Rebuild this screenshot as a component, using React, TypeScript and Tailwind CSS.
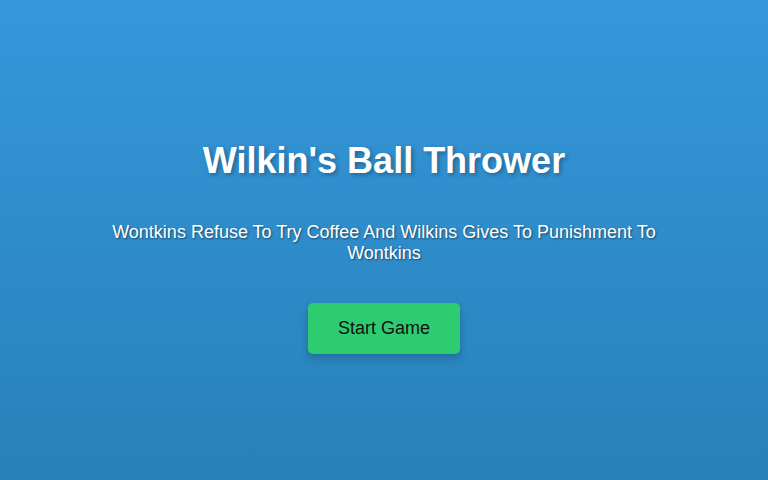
const App = () => {
  return (
    <div className="flex min-h-screen flex-col items-center justify-center bg-gradient-to-b from-[#3498db] to-[#2980b9] px-5 pt-3 text-center font-['Liberation_Sans',Arial,sans-serif] text-white">
      {/* Title */}
      <h1 className="mb-[38px] text-[36px] leading-[46px] font-bold [text-shadow:2px_2px_4px_rgba(0,0,0,0.3)]">
        Wilkin's Ball Thrower
      </h1>

      {/* Tagline */}
      <p className="mb-[39px] max-w-[600px] text-[18px] leading-[21px] [text-shadow:1px_1px_2px_rgba(0,0,0,0.5)]">
        Wontkins Refuse To Try Coffee And Wilkins Gives To Punishment To
        Wontkins
      </p>

      {/* Start button */}
      <button
        type="button"
        className="h-[51px] w-[152px] rounded-[5px] bg-[#2ecc71] text-[18px] text-[#111] shadow-[0_4px_8px_rgba(0,0,0,0.2)] transition hover:bg-[#27ae60]"
      >
        Start Game
      </button>
    </div>
  );
};

export default App;
